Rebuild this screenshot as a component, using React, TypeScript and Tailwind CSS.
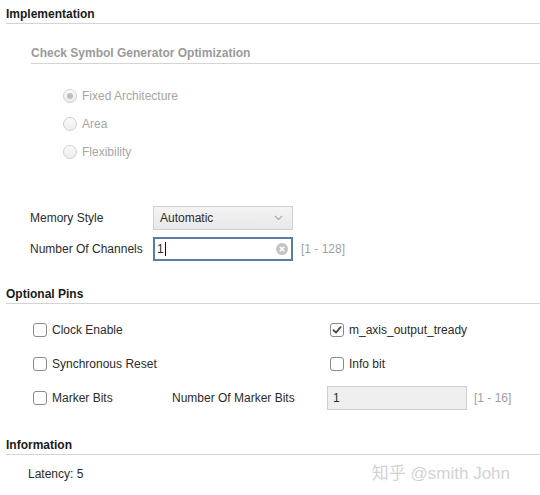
import React from 'react';

function SectionHeader({ title }: { title: string }) {
  return (
    <div className="ml-[6px] h-[24px] pt-[6px] border-b border-[#d4d4d4] font-bold text-[12px] leading-[16px] text-[#1a1a1a]">
      {title}
    </div>
  );
}

function Radio({ label, checked }: { label: string; checked?: boolean }) {
  return (
    <div className="h-[28px] flex items-center">
      <span className="w-[14px] h-[14px] rounded-full border border-[#cfcfcf] bg-gradient-to-b from-[#fafafa] to-[#ececec] flex items-center justify-center">
        {checked && <span className="w-[6px] h-[6px] rounded-full bg-[#bdbdbd]" />}
      </span>
      <span className="ml-[5px] text-[#a6a6a6]">{label}</span>
    </div>
  );
}

function Checkbox({ label, checked }: { label: string; checked?: boolean }) {
  return (
    <div className="flex items-center">
      <span className="w-[14px] h-[14px] rounded-[3px] border border-[#8a8a8a] bg-white flex items-center justify-center">
        {checked && (
          <svg width="10" height="10" viewBox="0 0 10 10">
            <path d="M1.5 5.2 L4 7.6 L8.6 2.2" fill="none" stroke="#4d4d4d" strokeWidth="1.9" strokeLinecap="round" strokeLinejoin="round" />
          </svg>
        )}
      </span>
      <span className="ml-[5px]">{label}</span>
    </div>
  );
}

export default function App() {
  return (
    <div className="w-[540px] h-[495px] bg-white text-[12px] leading-[16px] text-[#2b2b2b] font-['Liberation_Sans',Arial,sans-serif] overflow-hidden">
      <SectionHeader title="Implementation" />

      <div className="ml-[31px] mt-[21px]">
        <div className="pb-[2px] border-b border-[#d4d4d4] font-bold text-[#9a9a9a]">Check Symbol Generator Optimization</div>
        <div className="ml-[32px] mt-[18px]">
          <Radio label="Fixed Architecture" checked />
          <Radio label="Area" />
          <Radio label="Flexibility" />
        </div>
      </div>

      <div className="ml-[30px] mt-[40px] flex flex-col gap-[7px]">
        <div className="h-[24px] flex items-center">
          <span className="w-[123px]">Memory Style</span>
          <div className="w-[140px] h-[24px] border border-[#d0d0d0] bg-gradient-to-b from-[#f4f4f4] to-[#e8e8e8] flex items-center justify-between pl-[6px] pr-[9px]">
            <span>Automatic</span>
            <svg width="9" height="6" viewBox="0 0 9 6">
              <path d="M1 1 L4.5 4.5 L8 1" fill="none" stroke="#aaaaaa" strokeWidth="1.2" />
            </svg>
          </div>
        </div>
        <div className="h-[24px] flex items-center">
          <span className="w-[123px]">Number Of Channels</span>
          <div className="w-[140px] h-[24px] border-2 border-[#5a7ca6] bg-white flex items-center justify-between pl-[2px] pr-[3px]">
            <span className="flex items-center">
              1<span className="w-px h-[14px] bg-[#111] ml-px" />
            </span>
            <svg width="12" height="12" viewBox="0 0 12 12">
              <circle cx="6" cy="6" r="6" fill="#c4c4c4" />
              <path d="M3.8 3.8 L8.2 8.2 M8.2 3.8 L3.8 8.2" stroke="#fff" strokeWidth="1.6" />
            </svg>
          </div>
          <span className="ml-[8px] text-[#a0a0a0]">[1 - 128]</span>
        </div>
      </div>

      <div className="mt-[19px]">
        <SectionHeader title="Optional Pins" />
      </div>

      <div className="mt-[9px] pl-[33px]">
        <div className="h-[34px] flex items-center">
          <div className="w-[297px]"><Checkbox label="Clock Enable" /></div>
          <Checkbox label="m_axis_output_tready" checked />
        </div>
        <div className="h-[34px] flex items-center">
          <div className="w-[297px]"><Checkbox label="Synchronous Reset" /></div>
          <Checkbox label="Info bit" />
        </div>
        <div className="h-[34px] flex items-center">
          <div className="w-[139px]"><Checkbox label="Marker Bits" /></div>
          <span className="w-[155px]">Number Of Marker Bits</span>
          <div className="w-[140px] h-[24px] border border-[#cfcfcf] bg-[#efefef] flex items-center pl-[5px]">1</div>
          <span className="ml-[7px] text-[#a0a0a0]">[1 - 16]</span>
        </div>
      </div>

      <div className="mt-[16px]">
        <SectionHeader title="Information" />
      </div>

      <div className="h-[36px] pt-[2px] flex items-center justify-between pl-[28px] pr-[30px]">
        <span>Latency: 5</span>
        <span className="text-[17px] text-[#d2d2d2] font-['Liberation_Sans','Noto_Sans_CJK_SC',sans-serif]">知乎 @smith John</span>
      </div>
    </div>
  );
}
